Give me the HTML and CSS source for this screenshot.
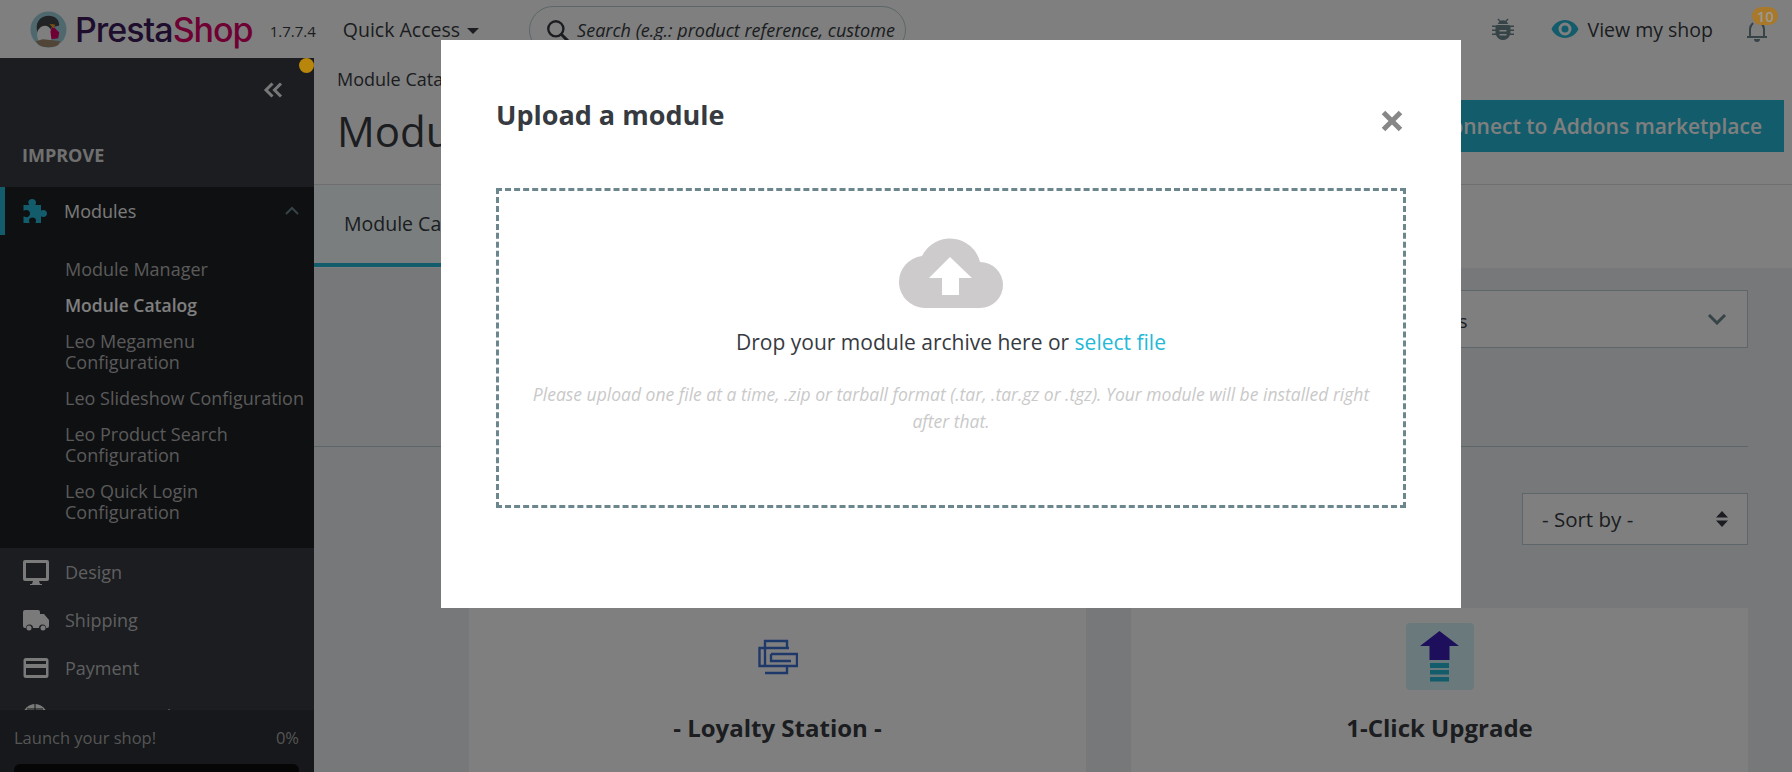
FILE: index.html
```html
<!DOCTYPE html>
<html lang="en">
<head>
<meta charset="UTF-8" />
<title>Module Catalog</title>
<link rel="stylesheet" href="styles.css">
</head>
<body>
<header class="topbar">
    <a class="logo">
        <svg class="logo-bird" viewBox="0 0 38 38" width="37" height="37">
            <circle cx="19" cy="19" r="18.500" fill="#9fd0dc"/>
            <path d="M7 19C6 10 12 5 19 5s11 4 11 10l-8 2-6 9H9z" fill="#44464a"/>
            <path d="M9 31c-3-6-2-12 3-15 4-2 8 0 9 3l3 8-4 5z" fill="#fff"/>
            <path d="M23 15l7 7-1 6-7 1-1-8z" fill="#df0067"/>
            <path d="M20 13l6 1-2 4z" fill="#f7a823"/>
            <path d="M6 31l7-2 10 1 8 1-2 4c-5 3-15 3-20 0z" fill="#a08a6c"/>
        </svg>
        <span class="logo-text"><span class="presta">Presta</span><span class="shop">Shop</span></span>
    </a>
    <span class="version">1.7.7.4</span>
    <span class="quick">Quick Access <i class="caret"></i></span>
    <div class="search">
        <svg viewBox="0 0 24 24" width="26" height="26"><circle cx="10" cy="10" r="7" fill="none" stroke="#363a41" stroke-width="2.200"/><path d="M15 15l7 7" stroke="#363a41" stroke-width="2.800"/></svg>
        <span>Search (e.g.: product reference, custome</span>
    </div>
    <div class="top-right">
        <svg class="bug" viewBox="0 0 22 24" width="22" height="24"><path fill="#6c868e" d="M14.600 4.500l2-2-1-1-2.300 2.300a6 6 0 0 0-4.600 0L6.400 1.500l-1 1 2 2A5.500 5.500 0 0 0 5.800 7h10.400a5.500 5.500 0 0 0-1.600-2.500zM22 10v-1.500h-3.800L17 8H5l-1.200.5H0V10h3.500v2.500H0V14h3.500v2.500H0V18h4c1.300 3.300 4 5 7 5s5.700-1.700 7-5h4v-1.500h-3.500V14H22v-1.500h-3.500V10zM14.500 18.500h-7V17h7zm0-4h-7V13h7z"/></svg>
        <span class="view-shop">
            <svg viewBox="0 0 28 20" width="28" height="20"><path fill="#25b9d7" fill-rule="evenodd" d="M14 1C8 1 3 4.700.5 10 3 15.300 8 19 14 19s11-3.700 13.500-9C25 4.700 20 1 14 1zm0 15.500a6.500 6.500 0 1 1 0-13 6.500 6.500 0 0 1 0 13zm0-10a3.500 3.500 0 1 0 0 7 3.500 3.500 0 0 0 0-7z"/></svg>
            View my shop
        </span>
        <span class="bell">
            <svg viewBox="0 0 22 22" width="22" height="22"><path fill="none" stroke="#6c868e" stroke-width="2" d="M1 17h20M4 17V9c0-3 2-5 3-6M18 17V9c0-3-2-5-3-6"/><path fill="#6c868e" d="M8 19h6a3 3 0 0 1-6 0z"/></svg>
            <b class="count">10</b>
        </span>
    </div>
</header>

<div class="layout">
    <aside class="sidebar">
        <i class="dot"></i>
        <div class="collapse">
            <svg viewBox="0 0 20 16" width="20" height="16"><path d="M9.500 1.500L3 8l6.500 6.500M18 1.500L11.500 8l6.500 6.500" fill="none" stroke="#f0f0f0" stroke-width="3"/></svg>
        </div>
        <div class="menu-title">IMPROVE</div>
        <div class="menu-open">
            <div class="menu-head">
                <svg viewBox="0 0 26 26" width="26" height="26"><path fill="#25b9d7" d="M10 1c2.500 0 4 1.500 4 3.500 0 1-.5 1.500-.5 2.500h5.500v5.500c1 0 1.500-.5 2.500-.5 2 0 3.500 1.300 3.500 3.500s-1.500 3.500-3.500 3.500c-1 0-1.500-.5-2.500-.5V25h-5.500c0-1 .5-1.500.5-2.500 0-2-1.500-3-3.500-3s-3.500 1-3.500 3c0 1 .5 1.500.5 2.500H1.500v-6.500c1 0 1.700.7 3 .7 2 0 3.500-1.700 3.500-3.700s-1.500-3.500-3.500-3.500c-1.300 0-2 .7-3 .7V7H7c0-1-.7-1.500-.7-2.500C6.300 2.500 8 1 10 1z"/></svg>
                <span>Modules</span>
                <svg class="chev" viewBox="0 0 16 10" width="16" height="10"><path d="M2 8l6-6 6 6" fill="none" stroke="#6c868e" stroke-width="2"/></svg>
            </div>
            <ul class="submenu">
                <li>Module Manager</li>
                <li class="current">Module Catalog</li>
                <li>Leo Megamenu Configuration</li>
                <li>Leo Slideshow Configuration</li>
                <li>Leo Product Search Configuration</li>
                <li>Leo Quick Login Configuration</li>
            </ul>
        </div>
        <ul class="menu">
            <li>
                <svg viewBox="0 0 28 26" width="28" height="26"><path fill="#f4f4f4" fill-rule="evenodd" d="M3 1h22a2 2 0 0 1 2 2v17a2 2 0 0 1-2 2h-8l1 3h2v1H8v-1h2l1-3H3a2 2 0 0 1-2-2V3a2 2 0 0 1 2-2zm1 3v15h20V4z"/></svg>
                <span>Design</span>
            </li>
            <li>
                <svg viewBox="0 0 28 22" width="28" height="22"><path fill="#f4f4f4" d="M3 1h13a2 2 0 0 1 2 2v2h4l5 6v6a2 2 0 0 1-2 2h-1a3.500 3.500 0 0 0-7 0h-6a3.500 3.500 0 0 0-7 0H3a2 2 0 0 1-2-2V3a2 2 0 0 1 2-2z"/><circle cx="7" cy="19" r="2.500" fill="#f4f4f4"/><circle cx="21" cy="19" r="2.500" fill="#f4f4f4"/></svg>
                <span>Shipping</span>
            </li>
            <li>
                <svg viewBox="0 0 28 24" width="28" height="24"><path fill="#f4f4f4" fill-rule="evenodd" d="M4 2h20a2.500 2.500 0 0 1 2.500 2.500v15A2.500 2.500 0 0 1 24 22H4a2.500 2.500 0 0 1-2.500-2.500v-15A2.500 2.500 0 0 1 4 2zm0 3v3h20V5zm0 7v7h20v-7z"/></svg>
                <span>Payment</span>
            </li>
            <li>
                <svg viewBox="0 0 26 26" width="26" height="26"><circle cx="13" cy="13" r="12" fill="#f4f4f4"/><path d="M1 13h24M13 1v24M5 6h16M5 20h16" stroke="#202226" stroke-width="1"/></svg>
                <span>International</span>
            </li>
        </ul>
        <div class="launch">
            <div class="launch-row"><span>Launch your shop!</span><span>0%</span></div>
            <div class="launch-bar"></div>
        </div>
    </aside>

    <main class="content">
        <div class="page-head">
            <div class="crumb">Module Catalog</div>
            <div class="title-row">
                <h1>Module</h1>
                <button class="connect">Connect to Addons marketplace</button>
            </div>
        </div>
        <nav class="tabs">
            <span class="tab">Module Catalog</span>
        </nav>
        <div class="filters">
            <div class="category-select">
                <span>All categories</span>
                <svg viewBox="0 0 20 12" width="20" height="12"><path d="M2 2l8 8 8-8" fill="none" stroke="#6c868e" stroke-width="3"/></svg>
            </div>
        </div>
        <hr class="rule">
        <div class="sort-row">
            <div class="sort">
                <span>- Sort by -</span>
                <svg viewBox="0 0 12 16" width="12" height="16"><path d="M6 0l6 6.500H0zM6 16L0 9.500h12z" fill="#363a41"/></svg>
            </div>
        </div>
        <div class="cards">
            <article class="card">
                <div class="card-logo">
                    <svg viewBox="0 0 40 36" width="40" height="36"><path d="M7 20V2h22v7M7 9H1.500v18H7M7 9h24M7 27V9M7 27h25M13 15h26v12h-7M13 15v7h20M7 34h22v-7" fill="none" stroke="#3f70d4" stroke-width="2.400"/></svg>
                </div>
                <h2>- Loyalty Station -</h2>
            </article>
            <article class="card">
                <div class="card-logo upgrade">
                    <svg viewBox="0 0 39 51" width="39" height="51"><path d="M19.500 0L39 15H29.500v14h-20V15H0z" fill="#3c1fb8"/><path d="M10 32h19v5H10zM10 39h19v4.500H10zM10 46h19v4.500H10z" fill="#25b9d7"/></svg>
                </div>
                <h2>1-Click Upgrade</h2>
            </article>
        </div>
    </main>
</div>

<div class="backdrop"></div>

<div class="modal">
    <div class="modal-head">
        <h3>Upload a module</h3>
        <svg class="close" viewBox="0 0 22 22" width="22" height="22"><path d="M2.500 2.500l17 17M19.500 2.500l-17 17" stroke="#878787" stroke-width="5"/></svg>
    </div>
    <div class="dropzone">
        <svg class="cloud" viewBox="0 0 106 70" width="106" height="70"><path fill="#cdcbcc" d="M26 70A26.100 26.100 0 0 1 24 18 31 31 0 0 1 82 24 23 23 0 0 1 82 70z"/><path fill="#fff" d="M52 19l22 21H61v17H44V40H31z"/></svg>
        <p class="drop-text">Drop your module archive here or <a class="select-file">select file</a></p>
        <p class="drop-help">Please upload one file at a time, .zip or tarball format (.tar, .tar.gz or .tgz). Your module will be installed right after that.</p>
    </div>
</div>
</body>
</html>
```

FILE: styles.css
```css
* { box-sizing: border-box; }
body { margin: 0; height: 772px; overflow: hidden; font-family: "Open Sans", sans-serif; color: #363a41; background: #eff1f2; }
ul { list-style: none; margin: 0; padding: 0; }

/* top bar */
.topbar { height: 58px; background: #fff; display: flex; align-items: center; }
.logo { display: flex; align-items: center; margin-left: 30px; }
.logo-text { font-family: "Inter", sans-serif; font-size: 34px; font-weight: 500; letter-spacing: -1px; margin-left: 8px; }
.presta { color: #3c1a5b; }
.shop { color: #df0067; }
.version { font-size: 15px; margin-left: 17px; margin-top: 4px; }
.quick { font-size: 19.500px; margin-left: 27px; white-space: nowrap; }
.caret { display: inline-block; border-left: 6px solid transparent; border-right: 6px solid transparent; border-top: 6px solid #363a41; margin-left: 2px; vertical-align: middle; }
.search { width: 377px; height: 48px; margin-left: 50px; margin-top: 1px; border: 1px solid #bbcdd2; border-radius: 24px; display: flex; align-items: center; padding-left: 15px; font-size: 18px; font-style: italic; white-space: nowrap; overflow: hidden; gap: 6px; }
.search svg { flex: none; margin-top: 2px; }
.top-right { margin-left: auto; display: flex; align-items: center; }
.view-shop { display: flex; align-items: center; gap: 9px; font-size: 19.500px; margin-left: 37px; }
.bell { margin-left: 33px; margin-right: 24px; position: relative; display: block; height: 22px; margin-top: 3px; }
.count { position: absolute; z-index: 3; left: 6px; top: -13px; width: 26px; height: 18px; border-radius: 9px; background: #a8792b; color: #9a9a9a; font-size: 15px; font-weight: 600; text-align: center; line-height: 18px; }

.layout { display: flex; height: 714px; overflow: hidden; }

/* sidebar */
.sidebar { width: 314px; flex: none; background: #363a41; position: relative; overflow: hidden; color: #e0e0e0; }
.dot { position: absolute; z-index: 3; right: 0; top: 0; width: 15px; height: 15px; border-radius: 50%; background: #b8860b; }
.collapse { height: 45px; display: flex; justify-content: flex-end; align-items: flex-end; padding: 0 31px 5px 0; }
.menu-title { font-size: 18px; font-weight: 700; padding: 0 22px; margin-top: 41px; height: 43px; line-height: 22px; }
.menu-open { background: #1f2024; height: 361px; }
.menu-head { height: 48px; display: flex; align-items: center; border-left: 5px solid #25b9d7; padding-left: 17px; font-size: 18px; color: #f4f4f4; }
.menu-head span { margin-left: 16px; }
.menu-head .chev { margin-left: auto; margin-right: 14px; }
.submenu { padding: 24px 5px 0 65px; font-size: 18px; line-height: 21px; color: #b4b4b4; }
.submenu li { margin-bottom: 15px; }
.submenu .current { color: #fff; font-weight: 600; font-size: 17.500px; }
.menu li { height: 48px; display: flex; align-items: center; padding-left: 22px; font-size: 18px; color: #bebebe; }
.menu span { margin-left: 15px; }
.menu svg { flex: none; }
.launch { position: absolute; left: 0; right: 0; bottom: 0; height: 62px; background: #2c3036; padding: 16px 15px 0 14px; font-size: 16.500px; color: #aaa; }
.launch-row { display: flex; justify-content: space-between; height: 38px; }
.launch-bar { height: 20px; background: #0c0d0f; border-radius: 6px; }

/* page content */
.content { flex: 1; min-width: 0; overflow: hidden; }
.page-head { background: #fff; height: 127px; padding: 9px 8px 0 23px; border-bottom: 1px solid #dfdfdf; }
.crumb { font-size: 18px; line-height: 25px; }
.title-row { display: flex; justify-content: space-between; align-items: flex-start; margin-top: 8px; }
h1 { font-size: 42px; font-weight: 400; margin: 3px 0 0; line-height: 56px; }
.connect { border: 0; background: #25b9d7; color: #fff; font: 600 21px "Open Sans", sans-serif; height: 52px; padding: 0 22px; }
.tabs { height: 83px; background: #fff; display: flex; }
.tab { padding: 25px 30px 0; font-size: 19.500px; width: 300px; background: #f5fdfd; border-bottom: 4px solid #25b9d7; height: 82px; }
.filters { padding: 22px 44px 0 0; display: flex; justify-content: flex-end; }
.category-select { width: 426px; height: 58px; border: 1px solid #bbcdd2; background: #fff; font-size: 19px; display: flex; align-items: center; justify-content: space-between; padding: 3px 20px 0 27px; }
.category-select svg { margin-top: -3px; }
.rule { border: 0; border-top: 1px solid #bbcdd2; margin: 98px 44px 0 0; }
.sort-row { display: flex; justify-content: flex-end; padding: 46px 44px 0 0; }
.sort { width: 226px; height: 52px; border: 1px solid #bbcdd2; background: #fff; font-size: 20.500px; display: flex; align-items: center; justify-content: space-between; padding: 0 19px 0 19px; }
.cards { display: flex; gap: 45px; padding: 63px 44px 0 155px; }
.card { flex: 1; height: 165px; background: #fff; text-align: center; padding-top: 15px; }
.card-logo { height: 67px; display: flex; align-items: center; justify-content: center; }
.upgrade { width: 68px; margin: 0 auto; background: #d3f2f8; border-radius: 4px; }
.card h2 { font-size: 24px; font-weight: 700; margin: 21px 0 0; line-height: 33px; color: #363a41; }

/* modal */
.backdrop { position: fixed; z-index: 2; inset: 0; background: rgba(0, 0, 0, 0.5); }
.modal { position: fixed; z-index: 4; left: 441px; top: 40px; width: 1020px; height: 568px; background: #fff; padding: 0 55px; }
.modal-head { height: 148px; display: flex; justify-content: space-between; }
.modal-head h3 { font-size: 27px; font-weight: 700; margin: 56px 0 0; line-height: 38px; }
.close { margin: 70px 3px 0 0; }
.dropzone { height: 320px; border: 3px dashed #6c868e; text-align: center; padding: 47px 28px 0; }
.cloud { display: block; margin: 0 auto; }
.drop-text { font-size: 21px; margin: 20px 0 0; line-height: 28px; }
.select-file { color: #25b9d7; }
.drop-help { font-size: 17.500px; font-style: italic; color: #c9c9c9; margin: 25px 0 0; line-height: 26.500px; }
```
